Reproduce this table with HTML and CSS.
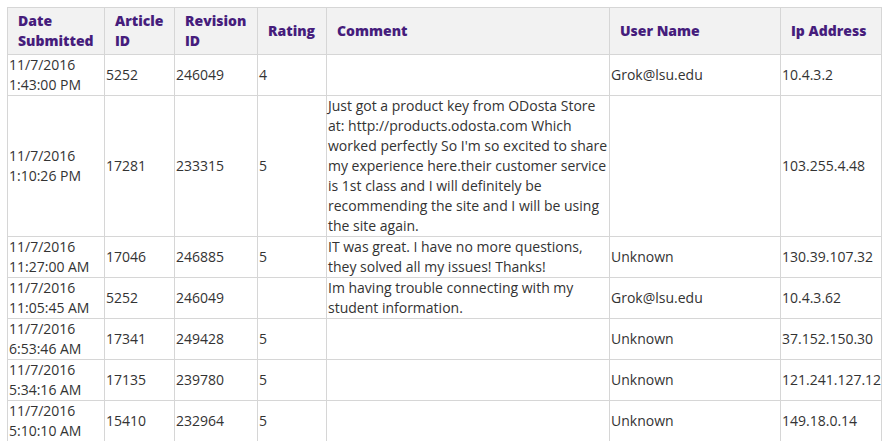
FILE: index.html
```html
<!DOCTYPE html>
<html>
<head>
<meta charset="utf-8">
<link rel="stylesheet" href="styles.css">
</head>
<body>
<table class="feedback">
  <colgroup>
    <col class="c-date">
    <col class="c-article">
    <col class="c-rev">
    <col class="c-rating">
    <col class="c-comment">
    <col class="c-user">
    <col class="c-ip">
  </colgroup>
  <thead>
    <tr>
      <th>Date Submitted</th>
      <th>Article ID</th>
      <th>Revision ID</th>
      <th>Rating</th>
      <th>Comment</th>
      <th>User Name</th>
      <th>Ip Address</th>
    </tr>
  </thead>
  <tbody>
    <tr>
      <td>11/7/2016 1:43:00 PM</td>
      <td>5252</td>
      <td>246049</td>
      <td>4</td>
      <td></td>
      <td>Grok@lsu.edu</td>
      <td>10.4.3.2</td>
    </tr>
    <tr>
      <td>11/7/2016 1:10:26 PM</td>
      <td>17281</td>
      <td>233315</td>
      <td>5</td>
      <td>Just got a product key from ODosta Store at: http://products.odosta.com Which worked perfectly So I'm so excited to share my experience here.their customer service is 1st class and I will definitely be recommending the site and I will be using the site again.</td>
      <td></td>
      <td>103.255.4.48</td>
    </tr>
    <tr>
      <td>11/7/2016 11:27:00 AM</td>
      <td>17046</td>
      <td>246885</td>
      <td>5</td>
      <td>IT was great. I have no more questions, they solved all my issues! Thanks!</td>
      <td>Unknown</td>
      <td>130.39.107.32</td>
    </tr>
    <tr>
      <td>11/7/2016 11:05:45 AM</td>
      <td>5252</td>
      <td>246049</td>
      <td></td>
      <td>Im having trouble connecting with my student information.</td>
      <td>Grok@lsu.edu</td>
      <td>10.4.3.62</td>
    </tr>
    <tr>
      <td>11/7/2016 6:53:46 AM</td>
      <td>17341</td>
      <td>249428</td>
      <td>5</td>
      <td></td>
      <td>Unknown</td>
      <td>37.152.150.30</td>
    </tr>
    <tr>
      <td>11/7/2016 5:34:16 AM</td>
      <td>17135</td>
      <td>239780</td>
      <td>5</td>
      <td></td>
      <td>Unknown</td>
      <td>121.241.127.12</td>
    </tr>
    <tr>
      <td>11/7/2016 5:10:10 AM</td>
      <td>15410</td>
      <td>232964</td>
      <td>5</td>
      <td></td>
      <td>Unknown</td>
      <td>149.18.0.14</td>
    </tr>
  </tbody>
</table>
</body>
</html>
```
FILE: styles.css
```css
html, body {
  margin: 0;
  padding: 0;
  background: #ffffff;
}

body {
  padding: 7px 0 0 7px;
  font-family: "Open Sans", "Noto Sans", sans-serif;
  font-size: 14px;
  line-height: 20px;
  color: #333333;
}

.feedback {
  border-collapse: collapse;
  table-layout: fixed;
  width: 875px;
}

.c-date { width: 97px; }
.c-article { width: 70px; }
.c-rev { width: 83px; }
.c-rating { width: 69px; }
.c-comment { width: 283px; }
.c-user { width: 171px; }
.c-ip { width: 101px; }

.feedback th,
.feedback td {
  border: 1px solid #d6d6d6;
  vertical-align: middle;
  text-align: left;
}

.feedback th {
  background: #f2f2f2;
  color: #461d7c;
  font-weight: 800;
  padding: 3px 10px;
}

.feedback td {
  padding: 0 0 0 1px;
  white-space: normal;
}
```
